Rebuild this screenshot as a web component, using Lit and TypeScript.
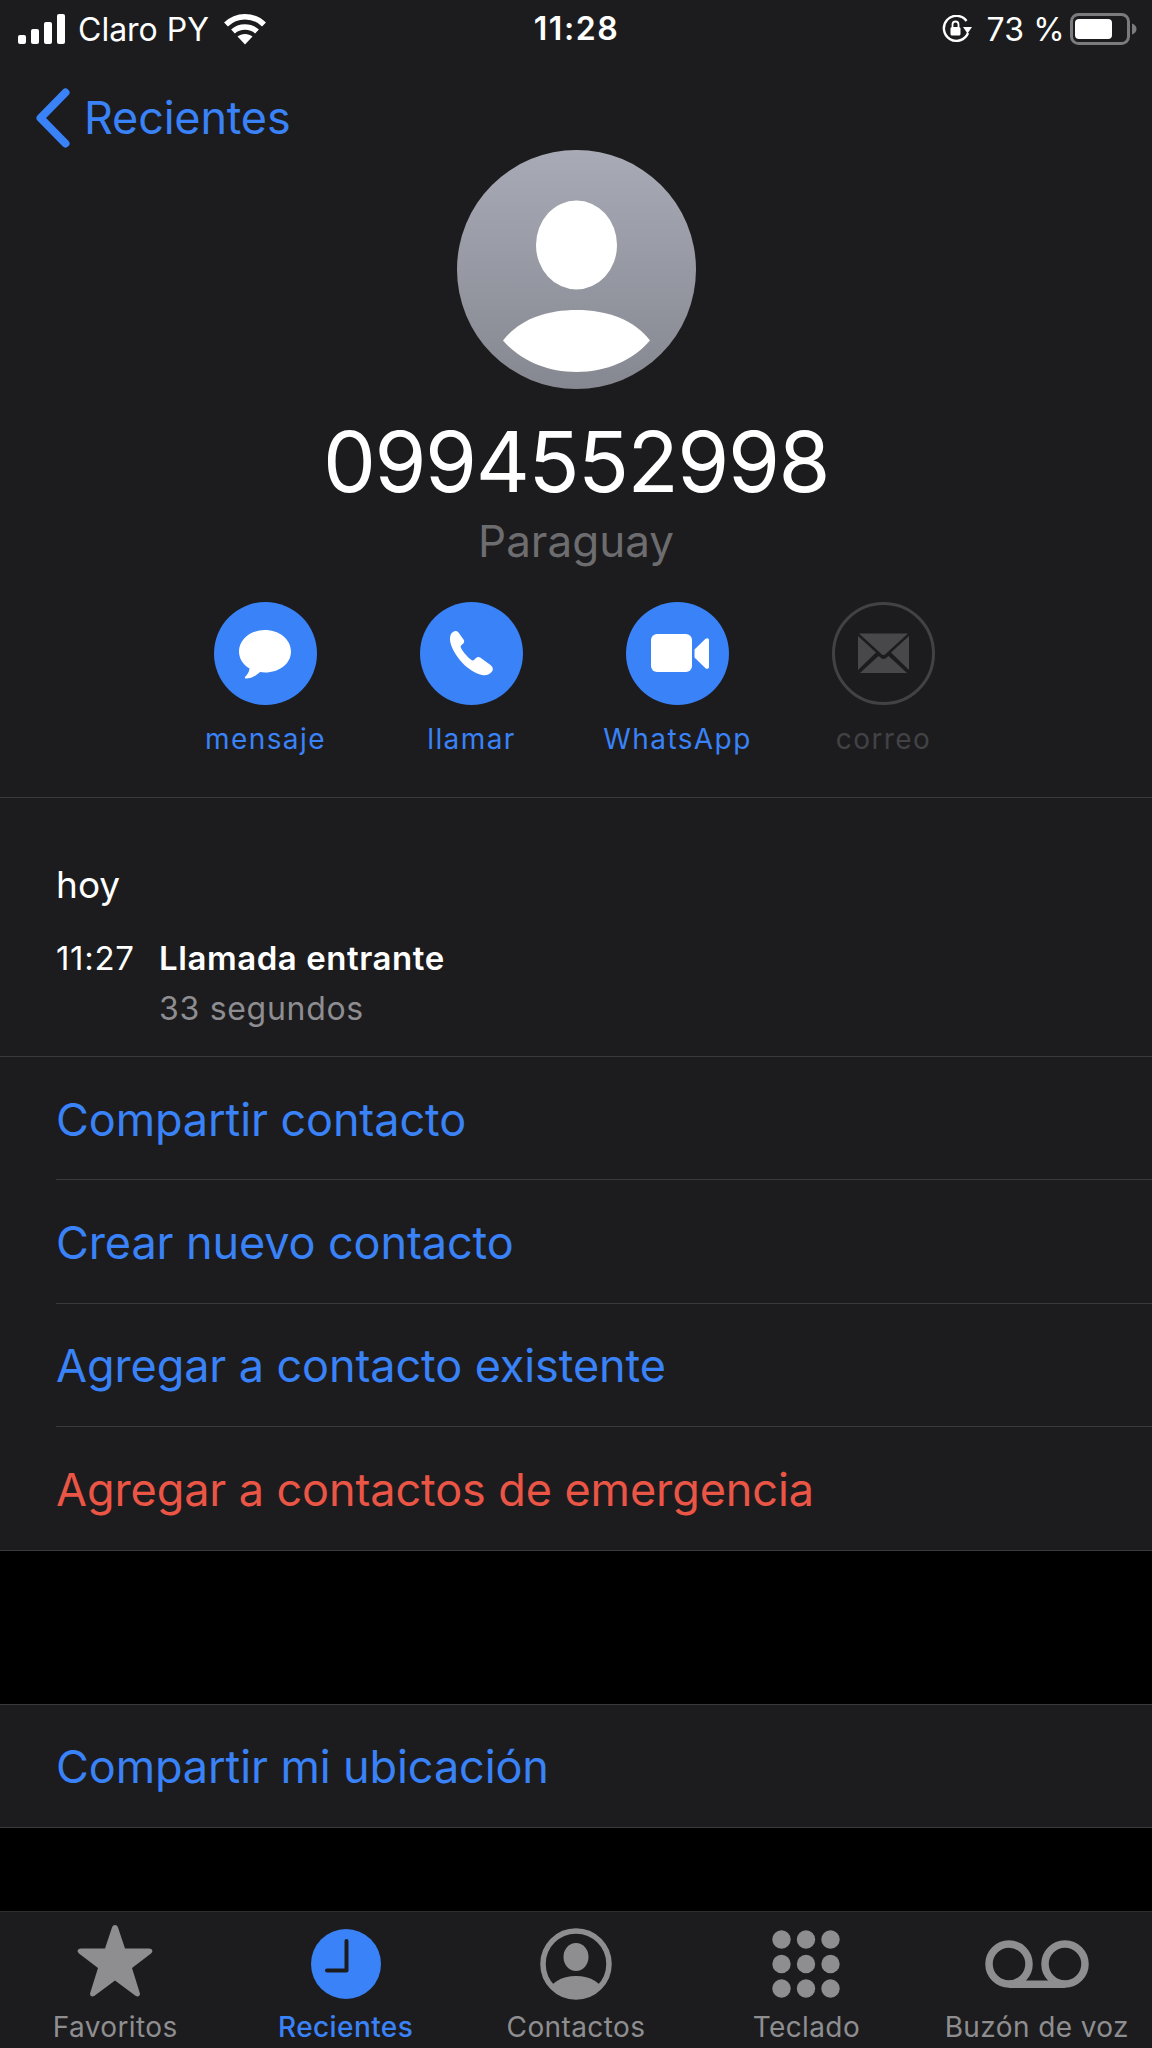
import { LitElement, html, css, svg } from "lit";
import { customElement } from "lit/decorators.js";

const grey = "#8e8e90";

@customElement("app-root")
export class AppRoot extends LitElement {
  static styles = css`
    :host { display: block; width: 1152px; height: 2048px; overflow: hidden; background: #000; color: #fff;
      font-family: Inter, "Noto Sans", "Liberation Sans", sans-serif; }
    svg { display: block; flex: none; }
    .top { background: #1c1c1e; height: 797px; display: flex; flex-direction: column; align-items: center; border-bottom: 1px solid #3a3a3c; box-sizing: content-box; }
    .status { width: 100%; box-sizing: border-box; height: 58px; padding: 0 15px 0 18px; display: grid; grid-template-columns: 1fr auto 1fr; align-items: center; }
    .sl, .sr { display: flex; align-items: center; font-size: 32px; font-weight: 400; height: 34px; }
    .sl { gap: 12px; }
    .wifi { margin-left: 3px; }
    .sr { justify-content: flex-end; }
    .time { font-size: 32px; font-weight: 600; height: 34px; line-height: 34px; letter-spacing: 1.6px; margin-left: -2px; }
    .pct { margin: 0 5px 0 14px; letter-spacing: 0.2px; }
    .nav { width: 100%; box-sizing: border-box; height: 90px; padding: 30px 0 0 36px; display: flex; align-items: flex-start; gap: 14px; color: #3a82f7; font-size: 45px; line-height: 59px; letter-spacing: -0.2px; }
    .avatar { margin-top: 2px; }
    .number { font-size: 84px; font-weight: 400; line-height: 90px; margin-top: 28px; letter-spacing: -1.5px; }
    .region { font-size: 44px; line-height: 50px; color: #6d6d70; margin-top: 9px; }
    .actions { display: flex; width: 824px; margin: 36px 3px 0 0; }
    .action { width: 206px; display: flex; flex-direction: column; align-items: center; color: #3a82f7; font-size: 28px; line-height: 34px; letter-spacing: 1.4px; gap: 17px; }
    .action.off { color: #424245; }
    .history { background: #1c1c1e; height: 259px; box-sizing: border-box; padding: 62px 0 0 56px; border-bottom: 1px solid #3a3a3c; }
    .hoy { font-size: 37px; line-height: 50px; }
    .call { display: grid; grid-template-columns: 103px auto; margin-top: 26px; font-size: 33px; line-height: 44px; letter-spacing: 0.7px; }
    .call b { font-weight: 600; font-size: 33px; letter-spacing: 0.55px; }
    .call span.dur { grid-column: 2; color: #8e8e92; font-size: 32px; line-height: 38px; margin-top: 10px; letter-spacing: 0.7px; }
    .list { background: #1c1c1e; padding-left: 56px; }
    .row { height: 123.33px; box-sizing: border-box; padding-top: 2px; border-bottom: 1px solid #3a3a3c; display: flex; align-items: center; color: #3a82f7; font-size: 45px; letter-spacing: -0.1px; }
    .row:last-child { border-bottom: none; }
    .row.solo { height: 121.3px; }
    .row.red { color: #eb5545; }
    .hr { height: 1px; background: #3a3a3c; }
    .gap1 { height: 153px; }
    .gap2 { height: 83px; }
    .tabs { height: 137px; box-sizing: border-box; background: #1c1c1e; border-top: 1px solid #2e2e30; display: grid; grid-template-columns: repeat(5, 1fr); }
    .tab { display: flex; flex-direction: column; align-items: center; color: ${css([grey] as any)}; font-size: 28px; letter-spacing: 0.4px; }
    .tab.on { color: #3a82f7; font-weight: 500; }
    .ico { height: 88px; margin-top: 8px; display: flex; align-items: center; justify-content: center; }
    .tab span { line-height: 36px; margin-top: 1px; white-space: nowrap; }
  `;

  private action(label: string, icon: unknown, off = false) {
    return html`<div class="action ${off ? "off" : ""}">${icon}<span>${label}</span></div>`;
  }

  private circle(content: unknown) {
    return html`<svg width="103" height="103" viewBox="0 0 103 103"><circle cx="51.5" cy="51.5" r="51.5" fill="#3a82f7"/>${content}</svg>`;
  }

  render() {
    return html`
      <div class="top">
        <div class="status">
          <div class="sl">
            <svg width="48" height="30" viewBox="0 0 48 30" fill="#fff">
              <rect x="0" y="21" width="8" height="9" rx="2"/><rect x="13" y="15" width="8" height="15" rx="2"/><rect x="26" y="8" width="8" height="22" rx="2"/><rect x="39" y="0" width="8" height="30" rx="2"/>
            </svg>
            <span>Claro PY</span>
            <svg class="wifi" width="42" height="32" viewBox="0 0 42 32" fill="none" stroke="#fff" stroke-width="5.500">
              <path d="M2 11.500C12.500 1 29.500 1 40 11.500"/><path d="M9 18.500C15.500 12.500 26.500 12.500 33 18.500"/><path d="M21 31.500L13.500 23.500C17.500 20 24.500 20 28.500 23.500Z" fill="#fff" stroke="none"/>
            </svg>
          </div>
          <div class="time">11:28</div>
          <div class="sr">
            <svg width="30" height="28" viewBox="0 0 30 28" fill="none">
              <path d="M26 18A12.500 12.500 0 1 1 24.500 6" stroke="#fff" stroke-width="2.400"/>
              <path d="M21 12H30L25.500 18.500Z" fill="#fff"/>
              <rect x="8.500" y="12" width="10" height="8.500" rx="1.500" fill="#fff"/>
              <path d="M10.500 12V9.500a3 3 0 0 1 6 0V12" stroke="#fff" stroke-width="1.800"/>
            </svg>
            <span class="pct">73 %</span>
            <svg width="67" height="32" viewBox="0 0 67 32">
              <rect x="1.500" y="1.500" width="57" height="29" rx="7" fill="none" stroke="#7b7b7d" stroke-width="3"/>
              <rect x="5" y="6" width="37" height="20" rx="4" fill="#fff"/>
              <path d="M62 10.500c3 1 4.500 3 4.500 5.500s-1.500 4.500-4.500 5.500Z" fill="#7b7b7d"/>
            </svg>
          </div>
        </div>
        <div class="nav">
          <svg width="34" height="60" viewBox="0 0 34 60" fill="none"><path d="M29.500 4.500L4.500 30L29.500 55.500" stroke="#3a82f7" stroke-width="8" stroke-linecap="round" stroke-linejoin="round"/></svg>
          <span>Recientes</span>
        </div>
        <svg class="avatar" width="239" height="239" viewBox="0 0 239 239">
          <defs><linearGradient id="g" x1="0" y1="0" x2="0" y2="1"><stop offset="0" stop-color="#a8abb6"/><stop offset="1" stop-color="#858890"/></linearGradient></defs>
          <circle cx="119.500" cy="119.500" r="119.500" fill="url(#g)"/>
          <ellipse cx="119.500" cy="95" rx="40.500" ry="44.500" fill="#fff"/>
          <path d="M46 190.500C62 170 88 160 119.500 160S177 170 193 190.500C176 210 150 222 119.500 222S63 210 46 190.500Z" fill="#fff"/>
        </svg>
        <div class="number">0994552998</div>
        <div class="region">Paraguay</div>
        <div class="actions">
          ${this.action("mensaje", this.circle(svg`
            <path d="M51 28C65.500 28 77 37.500 77 49.500S65.500 70.500 51 70.500C49 70.500 47.500 70.300 46 70C42.500 73.500 37 76.500 32 76.500C31 76.500 30.500 75.500 31.200 74.700C33.500 72.500 35.200 70 35.500 66.500C29 62.500 25 56.500 25 49.500C25 37.500 36.500 28 51 28Z" fill="#fff"/>`))}
          ${this.action("llamar", this.circle(svg`
            <path d="M33 30C35 28.500 37 29 38.500 30.500L43.500 37.500C44.500 39 44.500 40.500 43 41.800L41.500 43C40.500 44 40.500 45 41 46C43 50 48 55.500 51.500 58C52.500 58.700 53.500 58.500 54.500 57.500L56 56C57.500 54.700 59 54.700 60.500 55.800L70.500 63C73 65 73.500 67.500 72 69.500C70 72.500 66 74 62 73C48 70 34 54 30.500 41C29.500 36 30 32 33 30Z" fill="#fff"/>`))}
          ${this.action("WhatsApp", this.circle(svg`
            <rect x="25" y="32" width="41" height="38" rx="6" fill="#fff"/>
            <path d="M68.500 47.500L79.500 36.800C81 35.500 83 36.200 83 38V65C83 66.800 81 67.500 79.500 66.200L68.500 55.500Z" fill="#fff"/>`))}
          ${this.action("correo", html`<svg width="103" height="103" viewBox="0 0 103 103">
            <circle cx="51.500" cy="51.500" r="50" fill="none" stroke="#424245" stroke-width="3"/>
            <g fill="#48484b"><path d="M27 31.500H76L53 52.500C52 53.300 51 53.300 50 52.500Z"/><path d="M26 34V68L44 50.500Z"/><path d="M77 34V68L59 50.500Z"/><path d="M28 71L46.500 54L49 56C50.500 57.300 52.500 57.300 54 56L56.500 54L75 71Z"/></g>
          </svg>`, true)}
        </div>
      </div>
      <div class="history">
        <div class="hoy">hoy</div>
        <div class="call"><span>11:27</span><b>Llamada entrante</b><span class="dur">33 segundos</span></div>
      </div>
      <div class="list">
        <div class="row">Compartir contacto</div>
        <div class="row">Crear nuevo contacto</div>
        <div class="row">Agregar a contacto existente</div>
        <div class="row red">Agregar a contactos de emergencia</div>
      </div>
      <div class="hr"></div>
      <div class="gap1"></div>
      <div class="hr"></div>
      <div class="list"><div class="row solo">Compartir mi ubicación</div></div>
      <div class="hr"></div>
      <div class="gap2"></div>
      <div class="tabs">
        <div class="tab"><div class="ico">
          <svg width="76" height="79" viewBox="0 0 76 79"><path d="M38 1C39.500 1 40.500 2 41 3.500L48 24.500H72C75.500 24.500 76.500 27.500 74 29.500L55 44L62.800 69C63.500 71.800 61 73.500 58.500 71.800L38 56.500L17.500 71.800C15 73.500 12.500 71.800 13.200 69L21 44L2 29.500C-.5 27.500 .5 24.500 4 24.500H28L35 3.500C35.500 2 36.500 1 38 1Z" fill="${grey}"/></svg>
        </div><span>Favoritos</span></div>
        <div class="tab on"><div class="ico">
          <svg width="70" height="70" viewBox="0 0 70 70"><circle cx="35" cy="35" r="35" fill="#3a82f7"/><path d="M35.500 12V41.500H16" fill="none" stroke="#1c1c1e" stroke-width="4" stroke-linecap="round" stroke-linejoin="round"/></svg>
        </div><span>Recientes</span></div>
        <div class="tab"><div class="ico">
          <svg width="72" height="72" viewBox="0 0 72 72"><defs><clipPath id="c"><circle cx="36" cy="36" r="33"/></clipPath></defs>
            <circle cx="36" cy="36" r="33" fill="none" stroke="${grey}" stroke-width="5.500"/>
            <ellipse cx="36" cy="29" rx="12.500" ry="14" fill="${grey}"/>
            <ellipse cx="36" cy="65" rx="27" ry="17" fill="${grey}" clip-path="url(#c)"/>
          </svg>
        </div><span>Contactos</span></div>
        <div class="tab"><div class="ico">
          <svg width="68" height="68" viewBox="0 0 68 68" fill="${grey}">
            ${[0, 1, 2].flatMap((r) => [0, 1, 2].map((c) => svg`<circle cx="${9.500 + c * 24.500}" cy="${9.500 + r * 24.500}" r="9.200"/>`))}
          </svg>
        </div><span>Teclado</span></div>
        <div class="tab"><div class="ico">
          <svg width="104" height="48" viewBox="0 0 104 48" fill="none" stroke="${grey}" stroke-width="7.500"><circle cx="24" cy="24" r="20"/><circle cx="80" cy="24" r="20"/><path d="M24 44.200H80"/></svg>
        </div><span>Buzón de voz</span></div>
      </div>
    `;
  }
}
